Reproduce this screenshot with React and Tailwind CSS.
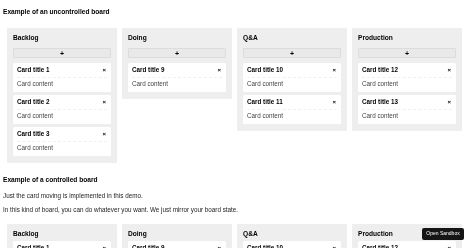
import React from "react";

const board1 = [
  { title: "Backlog", cards: [1, 2, 3] },
  { title: "Doing", cards: [9] },
  { title: "Q&A", cards: [10, 11] },
  { title: "Production", cards: [12, 13] },
];

const board2 = [
  { title: "Backlog", cards: [1, 2, 3] },
  { title: "Doing", cards: [9] },
  { title: "Q&A", cards: [10, 11] },
  { title: "Production", cards: [12, 13] },
];

function Card({ n }) {
  return (
    <div className="bg-white rounded-[1.5px] px-[4px] pt-[4px] pb-[5px] mb-[3px]">
      <div className="flex items-center justify-between font-bold leading-[6px] pb-[4px] border-b border-dashed border-[#f0f0f0]">
        <span>Card title {n}</span>
        <span className="text-[6px] leading-[6px] mr-[1px] font-bold">×</span>
      </div>
      <div className="leading-[6px] pt-[3px] text-[#444]">Card content</div>
    </div>
  );
}

function Column({ col, addButton }) {
  return (
    <div className="w-[110px] shrink-0 bg-[#eeeeee] rounded-[1px] px-[6px] pt-[6px] pb-[4px]">
      <div className={addButton ? "font-bold text-[6.6px] leading-[8px] mb-[6px]" : "font-bold text-[6.6px] leading-[8px] mb-[3px]"}>
        {col.title}
      </div>
      {addButton && (
        <div className="h-[10px] border border-[#dcdcdc] bg-[#e9e9e9] rounded-[1px] flex items-center justify-center mb-[5px] font-bold text-[7px] leading-none">
          +
        </div>
      )}
      {col.cards.map((n) => (
        <Card key={n} n={n} />
      ))}
    </div>
  );
}

export default function App() {
  return (
    <div className="relative w-[474px] h-[248px] overflow-hidden bg-white text-black text-[6.3px] px-[3px] font-['Liberation_Sans',Arial,sans-serif] will-change-transform">
      <div className="font-bold text-[6.6px] leading-[8px] pt-[8px]">Example of an uncontrolled board</div>
      <div className="flex items-start gap-[5px] pl-[4px] mt-[12px]">
        {board1.map((c) => (
          <Column key={c.title} col={c} addButton />
        ))}
      </div>
      <div className="font-bold text-[6.6px] leading-[8px] mt-[13px]">Example of a controlled board</div>
      <div className="leading-[8px] mt-[8px] text-[#222]">Just the card moving is implemented in this demo.</div>
      <div className="leading-[8px] mt-[6px] text-[#222]">
        In this kind of board, you can do whatever you want. We just mirror your board state.
      </div>
      <div className="flex items-start gap-[5px] pl-[4px] mt-[10px]">
        {board2.map((c) => (
          <Column key={c.title} col={c} />
        ))}
      </div>
      <div className="absolute left-[422px] top-[228px] w-[42px] h-[12px] bg-[#151515] rounded-[2px] text-white text-[5px] flex items-center justify-center">
        Open Sandbox
      </div>
    </div>
  );
}
